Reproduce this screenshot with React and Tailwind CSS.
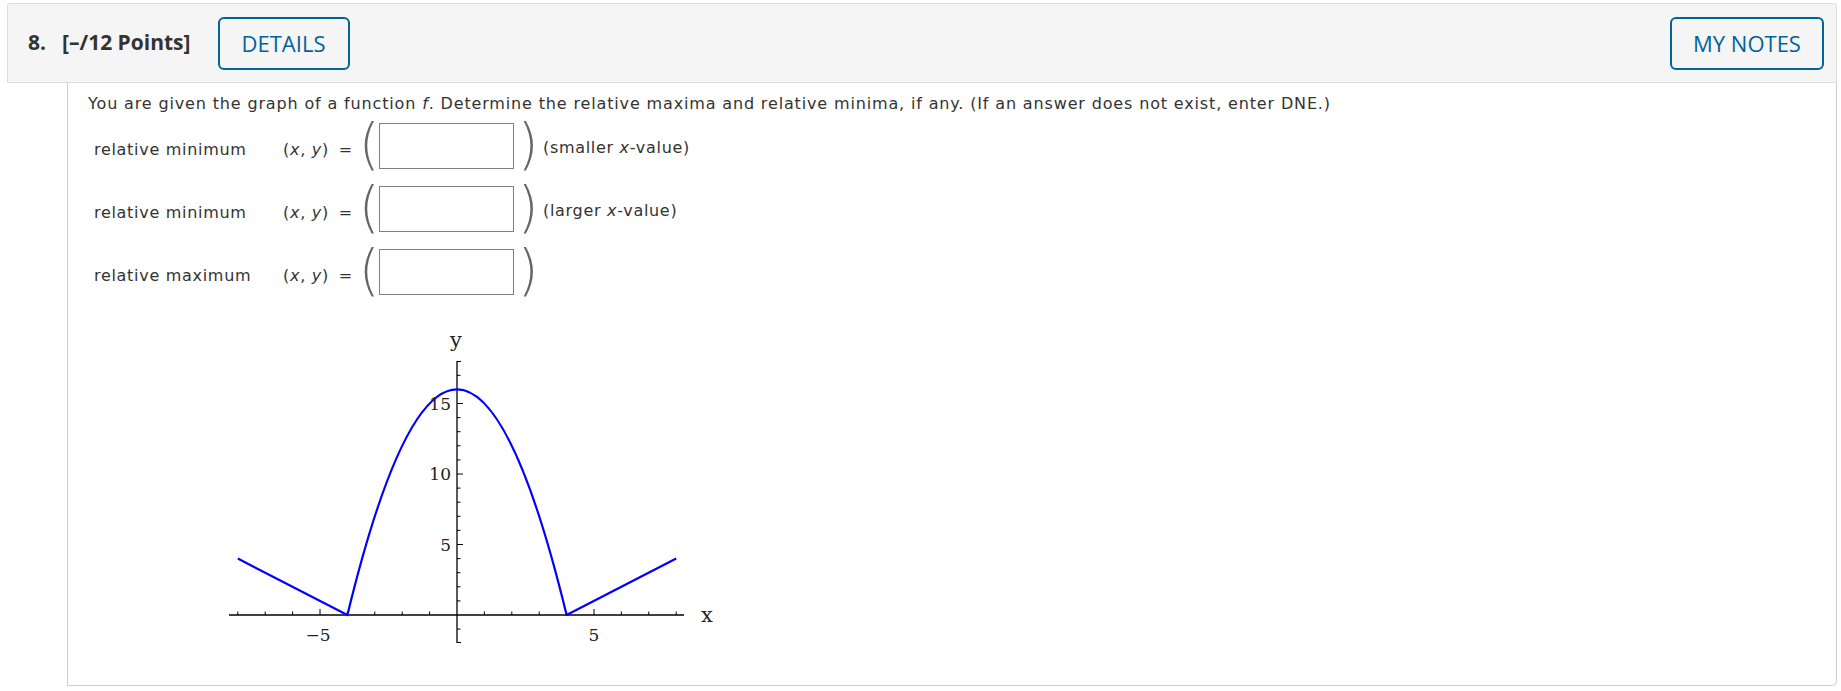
import React from 'react'

const body = { fontFamily: '"DejaVu Sans", Verdana, sans-serif' }
const head = { fontFamily: '"Open Sans", "Noto Sans", sans-serif' }
const serif = '"DejaVu Serif", "Liberation Serif", serif'

// graph mapping: origin + units in svg px
const ox = 257, oy = 295, ux = 27.4, uy = 14.1
const X = x => ox + ux * x
const Y = y => oy - uy * y

function Paren({ children }) {
  return (
    <span className="inline-block text-[52px] leading-none text-[#666] font-extralight scale-y-[1.05]"
      style={{ fontFamily: '"DejaVu Sans", sans-serif' }}>
      {children}
    </span>
  )
}

function AnswerRow({ label, note }) {
  return (
    <div className="flex items-center h-[46px] text-[16px] tracking-[0.7px] text-[#333]">
      <span className="w-[195px] pl-[6px] pt-[8px]">{label}</span>
      <span className="pt-[8px]">(<i>x</i>, <i>y</i>)</span>
      <span className="ml-[10px] pt-[8px]">=</span>
      <span className="ml-[6px] -mt-[4px]"><Paren>(</Paren></span>
      <div className="-ml-[1px] w-[135px] h-[46px] border border-[#808080] bg-white" />
      <span className="ml-[4px] -mt-[4px]"><Paren>)</Paren></span>
      {note && <span className="ml-[4px] pt-[3px]">{note}</span>}
    </div>
  )
}

function Graph() {
  const xTicks = []
  for (let i = -8; i <= 8; i++) {
    if (i === 0) continue
    const major = i % 5 === 0
    xTicks.push(<line key={'x' + i} x1={X(i)} x2={X(i)} y1={oy} y2={oy - (major ? 6 : 3.5)} stroke="#000" strokeWidth="1" />)
  }
  const yTicks = []
  for (let j = -1; j <= 17; j++) {
    if (j === 0) continue
    const major = j % 5 === 0
    yTicks.push(<line key={'y' + j} x1={ox} x2={ox + (major ? 6 : 3.5)} y1={Y(j)} y2={Y(j)} stroke="#000" strokeWidth="1" />)
  }
  return (
    <svg width="520" height="345" viewBox="0 0 520 345" className="block">
      {/* axes */}
      <line x1="29" x2="484" y1={oy} y2={oy} stroke="#000" strokeWidth="1.3" />
      <line x1={ox} x2={ox} y1="41" y2="323" stroke="#000" strokeWidth="1.3" />
      <line x1={ox} x2={ox + 4} y1="41.5" y2="41.5" stroke="#000" strokeWidth="1" />
      <line x1={ox} x2={ox + 4} y1="322.5" y2="322.5" stroke="#000" strokeWidth="1" />
      {xTicks}
      {yTicks}
      {/* curve */}
      <path
        d={`M${X(-8)} ${Y(4)} L${X(-4)} ${Y(0)} Q${X(0)} ${Y(32)} ${X(4)} ${Y(0)} L${X(8)} ${Y(4)}`}
        fill="none" stroke="#0000ff" strokeWidth="2.2" strokeLinejoin="round" />
      {/* labels */}
      <g fontFamily={serif} fontSize="17" fill="#222">
        <text x="251" y={Y(15) + 6} textAnchor="end">15</text>
        <text x="251" y={Y(10) + 6} textAnchor="end">10</text>
        <text x="251" y={Y(5) + 6} textAnchor="end">5</text>
        <text x={X(-5) - 2} y="321" textAnchor="middle">−5</text>
        <text x={X(5)} y="321" textAnchor="middle">5</text>
      </g>
      <g fontFamily={serif} fontSize="21" fill="#222">
        <text x="256" y="27" textAnchor="middle">y</text>
        <text x="507" y="302" textAnchor="middle">x</text>
      </g>
    </svg>
  )
}

export default function App() {
  return (
    <div className="w-[1841px] h-[691px] bg-white overflow-hidden">
      {/* Header */}
      <div className="mt-[3px] ml-[7px] w-[1830px] h-[80px] bg-[#f5f5f5] border border-[#dcdcdc] rounded-t-[3px] flex items-center pl-[20px] pr-[12px]"
        style={head}>
        <span className="text-[21px] font-bold text-[#333]">8.</span>
        <span className="ml-[16px] text-[21px] font-bold text-[#333]">[–/12 Points]</span>
        <button className="ml-[27px] w-[132px] h-[53px] border-2 border-[#00639c] rounded-[6px] text-[22px] text-[#00639c] bg-[#f5f5f5]">
          DETAILS
        </button>
        <div className="flex-1" />
        <button className="w-[154px] h-[53px] border-2 border-[#00639c] rounded-[6px] text-[22px] text-[#00639c] bg-[#f5f5f5]">
          MY NOTES
        </button>
      </div>

      {/* Question panel */}
      <div className="ml-[67px] w-[1770px] h-[603px] border-l border-r border-b border-[#cfcfcf] rounded-br-[5px] pl-[20px] pt-[10px]"
        style={body}>
        <p className="text-[16px] tracking-[0.85px] leading-[22px] text-[#333]">
          You are given the graph of a function <i>f</i>. Determine the relative maxima and relative minima, if any. (If an answer does not exist, enter DNE.)
        </p>
        <div className="mt-[8px] flex flex-col gap-[17px]">
          <AnswerRow label="relative minimum" note={<>(smaller <i>x</i>-value)</>} />
          <AnswerRow label="relative minimum" note={<>(larger <i>x</i>-value)</>} />
          <AnswerRow label="relative maximum" />
        </div>
        <div className="mt-[25px] ml-[112px]">
          <Graph />
        </div>
      </div>
    </div>
  )
}
